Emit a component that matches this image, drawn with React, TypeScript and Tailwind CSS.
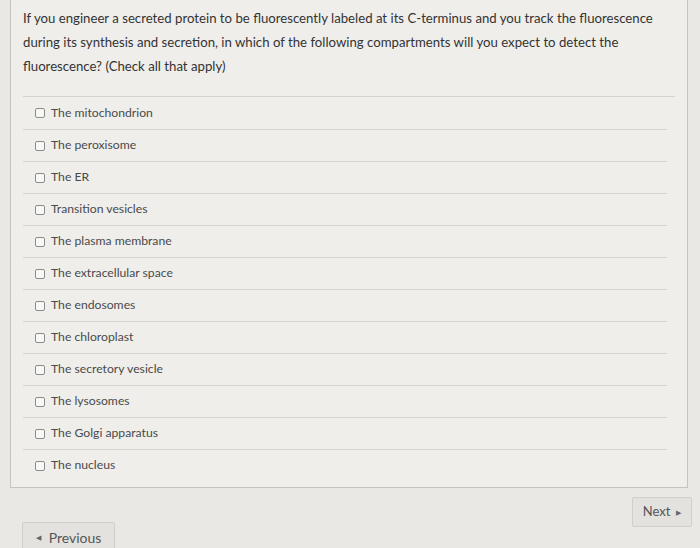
const options = [
  "The mitochondrion",
  "The peroxisome",
  "The ER",
  "Transition vesicles",
  "The plasma membrane",
  "The extracellular space",
  "The endosomes",
  "The chloroplast",
  "The secretory vesicle",
  "The lysosomes",
  "The Golgi apparatus",
  "The nucleus",
];

export default function App() {
  return (
    <div className="h-[548px] w-[700px] overflow-hidden bg-[#e9e8e4] font-['Lato','Liberation_Sans',sans-serif]">
      {/* question card */}
      <div className="ml-[10px] h-[488px] w-[678px] border-x border-b border-[#c4c4c0] bg-[#efeeeb]">
        <div className="mx-[12px] border-b border-[#d3d3cf] pt-[6px] pb-[18px] text-[13.2px] leading-[24px] text-[#333]">
          If you engineer a secreted protein to be fluorescently labeled at its C-terminus and you track the fluorescence
          <br />
          during its synthesis and secretion, in which of the following compartments will you expect to detect the
          <br />
          fluorescence? (Check all that apply)
        </div>

        <div className="ml-[12px] mr-[20px]">
          {options.map((label, i) => (
            <div
              key={label}
              className={
                "flex h-[32px] items-center gap-[6px] pl-[12px] " +
                (i > 0 ? "border-t border-[#d3d3cf]" : "")
              }
            >
              <span className="h-[10px] w-[10px] rounded-[2px] border border-[#8c8c88] bg-[#f7f7f5]" />
              <span className="text-[12.2px] text-[#4a4a4a]">{label}</span>
            </div>
          ))}
        </div>
      </div>

      {/* navigation */}
      <div className="flex justify-end pr-[8px] pt-[9px]">
        <button className="flex h-[30px] w-[60px] items-center justify-center gap-[6px] rounded-[2px] border border-[#cfcfcb] bg-[#e3e2de] text-[13px] text-[#555]">
          Next
          <span className="text-[7px] text-[#666]">▶</span>
        </button>
      </div>
      <div className="-mt-[5px] pl-[22px]">
        <button className="flex h-[30px] w-[93px] items-center justify-center gap-[8px] rounded-[2px] border border-[#cfcfcb] bg-[#e3e2de] text-[14px] text-[#555]">
          <span className="text-[7px] text-[#666]">◀</span>
          Previous
        </button>
      </div>
    </div>
  );
}
